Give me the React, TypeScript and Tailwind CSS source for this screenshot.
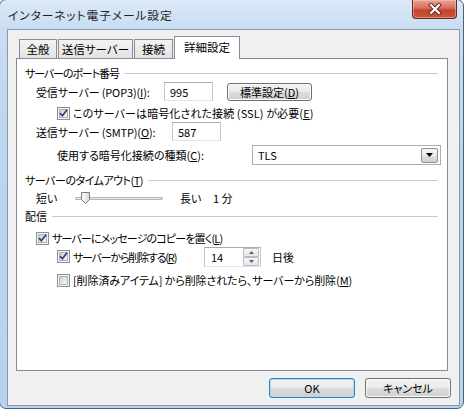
import type { ReactNode } from "react";

const font = "font-['Noto_Sans_CJK_JP','Noto_Sans_CJK_SC',sans-serif] [font-feature-settings:'palt']";

export default function App() {
  return (
    <div className={`h-[412px] w-[466px] overflow-hidden bg-white text-[11px] font-normal leading-[14px] text-black ${font}`}>
      <div className="-ml-px -mt-px flex h-[410px] w-[465px] flex-col rounded-[7px] border border-[#4f6073] bg-[linear-gradient(180deg,#dce9f8_0px,#c9ddf2_28px,#bdd5ee_140px,#b9d1ec_100%)]">
        {/* title bar */}
        <div className="flex h-[29px] shrink-0 items-start">
          <span className="ml-[8px] mt-[8px] whitespace-nowrap text-[11.75px] tracking-[0.9px] text-[#1e1e1e]">
            インターネット電子メール設定
          </span>
          <CloseButton />
        </div>

        {/* client area */}
        <div className="ml-[7px] flex h-[377px] w-[453px] flex-col border border-[#8799b0] bg-[#f0f0f0]">
          <div className="relative z-10 mt-[6px] flex h-[23px] items-start pl-[11px]">
            <Tab width="w-[38px]">全般</Tab>
            <Tab width="w-[75px] ml-px">送信サーバー</Tab>
            <Tab width="w-[39px] ml-px">接続</Tab>
            <div className="ml-px flex h-[23px] w-[66px] items-center justify-center border border-b-0 border-[#898c95] bg-white pb-[2px] text-[11.5px]">
              詳細設定
            </div>
          </div>

          <div className="-mt-px ml-[8px] flex h-[313px] w-[432px] flex-col border border-[#898c95] bg-white">
            <Header className="mt-[5px]" tracking="tracking-[-1.1px]">
              サーバーのポート番号
            </Header>

            <div className="flex h-[19px] items-center pl-[19px]">
              <span className="w-[128px] shrink-0 whitespace-nowrap tracking-[-0.15px]">
                受信サーバー (POP3)(<u>I</u>):
              </span>
              <Edit width="w-[49px]">995</Edit>
              <Button className="ml-[14px] h-[18px] w-[85px]">
                標準設定(<u>D</u>)
              </Button>
            </div>

            <div className="mt-[3px] flex h-[18px] items-center pl-[40px]">
              <CheckBox checked />
              <span className="ml-[3px] whitespace-nowrap tracking-[0.1px]">
                このサーバーは暗号化された接続 (SSL) が必要(<u>E</u>)
              </span>
            </div>

            <div className="flex h-[19px] items-center pl-[19px]">
              <span className="w-[136px] shrink-0 whitespace-nowrap tracking-[-0.15px]">
                送信サーバー (SMTP)(<u>O</u>):
              </span>
              <Edit width="w-[49px]">587</Edit>
            </div>

            <div className="mt-[4px] flex h-[20px] items-center pl-[40px]">
              <span className="w-[195px] shrink-0 whitespace-nowrap">
                使用する暗号化接続の種類(<u>C</u>):
              </span>
              <div className="flex h-[20px] w-[189px] items-center border border-[#abadb3] bg-white pl-[5px] pr-[2px]">
                <span className="flex-1">TLS</span>
                <div className="flex h-[15px] w-[17px] items-center justify-center rounded-[2px] border border-[#8e8f8f] bg-[linear-gradient(180deg,#f6f6f6_0%,#ebebeb_50%,#dddddd_50%,#d1d1d1_100%)]">
                  <svg width="7" height="4" viewBox="0 0 7 4">
                    <path d="M0 0 H7 L3.5 4 Z" fill="#000" />
                  </svg>
                </div>
              </div>
            </div>

            <Header className="mt-[6px]" tracking="tracking-[-0.5px]">
              サーバーのタイムアウト(<u>T</u>)
            </Header>

            <div className="flex h-[18px] items-center pl-[19px]">
              <span className="w-[39px] shrink-0">短い</span>
              <div className="relative h-[18px] w-[88px] shrink-0">
                <div className="absolute left-0 right-0 top-[8px] h-[3px] rounded-[1px] border border-[#b4b9be] bg-[#e7eaec]" />
                <svg className="absolute left-[6px] top-[3px]" width="9" height="12" viewBox="0 0 9 12">
                  <defs>
                    <linearGradient id="thumb" x1="0" y1="0" x2="1" y2="0">
                      <stop offset="0" stopColor="#ffffff" />
                      <stop offset="1" stopColor="#d4d8dc" />
                    </linearGradient>
                  </defs>
                  <path d="M0.5 0.5 H8.5 V7.5 L4.5 11.5 L0.5 7.5 Z" fill="url(#thumb)" stroke="#7c8186" />
                </svg>
              </div>
              <span className="ml-[17px] w-[33px] shrink-0">長い</span>
              <span>1 分</span>
            </div>

            <Header>配信</Header>

            <div className="mt-[4px] flex h-[18px] items-center pl-[19px]">
              <CheckBox checked />
              <span className="ml-[3px] whitespace-nowrap tracking-[-0.85px]">
                サーバーにメッセージのコピーを置く(<u>L</u>)
              </span>
            </div>

            <div className="flex h-[19px] items-center pl-[40px]">
              <CheckBox checked />
              <span className="ml-[3px] w-[131px] shrink-0 whitespace-nowrap tracking-[-1.2px]">
                サーバーから削除する(<u>R</u>)
              </span>
              <Spinner value="14" />
              <span className="ml-[11px]">日後</span>
            </div>

            <div className="mt-[5px] flex h-[18px] items-center pl-[40px]">
              <CheckBox checked={false} />
              <span className="ml-[3px] whitespace-nowrap tracking-[-0.1px]">
                [削除済みアイテム] から削除されたら、サーバーから削除(<u>M</u>)
              </span>
            </div>
          </div>

          <div className="mt-[7px] flex justify-end gap-[10px] pr-[8px]">
            <Button className="h-[20px] w-[86px]" primary>
              OK
            </Button>
            <Button className="h-[20px] w-[86px]">キャンセル</Button>
          </div>
        </div>
      </div>
    </div>
  );
}

function CloseButton() {
  return (
    <div className="ml-auto mr-[6px] flex h-[19px] w-[45px] items-center justify-center rounded-b-[4px] border border-t-0 border-[#5e2b26] bg-[linear-gradient(180deg,#e8a493_0%,#d6705c_45%,#c3432d_55%,#c9553c_100%)] shadow-[inset_0_0_0_1px_rgba(255,210,200,0.45)]">
      <svg width="14" height="12" viewBox="0 0 14 12">
        <path d="M3 2 L11 10 M11 2 L3 10" stroke="#5a2420" strokeWidth="4" strokeLinecap="square" />
        <path d="M3 2 L11 10 M11 2 L3 10" stroke="#ffffff" strokeWidth="2.2" strokeLinecap="square" />
      </svg>
    </div>
  );
}

function Tab({ width, children }: { width: string; children: ReactNode }) {
  return (
    <div
      className={`${width} mt-[3px] flex h-[19px] items-center justify-center border border-b-0 border-[#898c95] bg-[linear-gradient(180deg,#f3f3f3_0%,#ebebeb_50%,#e2e2e2_100%)] text-[11.5px]`}
    >
      {children}
    </div>
  );
}

function Header({
  className = "",
  tracking = "",
  children,
}: {
  className?: string;
  tracking?: string;
  children: ReactNode;
}) {
  return (
    <div className={`flex h-[18px] items-center pl-[8px] pr-[9px] ${className}`}>
      <span className={`whitespace-nowrap ${tracking}`}>{children}</span>
      <span className="ml-[5px] h-px flex-1 bg-[#c5cace]" />
    </div>
  );
}

function Edit({ width, children }: { width: string; children: ReactNode }) {
  return (
    <div
      className={`${width} flex h-[19px] shrink-0 items-center border border-[#c2c6cd] border-t-[#abadb3] border-b-[#dfe3ea] bg-white pl-[5px]`}
    >
      {children}
    </div>
  );
}

function Button({
  className = "",
  primary = false,
  children,
}: {
  className?: string;
  primary?: boolean;
  children: ReactNode;
}) {
  return (
    <div
      className={`${className} flex shrink-0 items-center justify-center rounded-[3px] border bg-[linear-gradient(180deg,#f2f2f2_0%,#ebebeb_50%,#dddddd_50%,#cfcfcf_100%)] ${
        primary
          ? "border-[#3c7fb1] shadow-[inset_0_0_0_1px_#a6dcf6]"
          : "border-[#707070] shadow-[inset_0_0_0_1px_#fafafa]"
      }`}
    >
      {children}
    </div>
  );
}

function CheckBox({ checked }: { checked: boolean }) {
  return (
    <span className="flex h-[13px] w-[13px] shrink-0 items-center justify-center border border-[#8e8f8f] bg-[#f4f4f4]">
      <span className="flex h-[9px] w-[9px] items-center justify-center border border-[#aeb3b9] bg-[linear-gradient(135deg,#c9ced4_0%,#e6e8eb_60%,#f8f8f8_100%)]">
        {checked && (
          <svg width="9" height="9" viewBox="0 0 9 9" className="overflow-visible">
            <path d="M1 4.2 L3.4 6.8 L8 0.8" fill="none" stroke="#2f3f78" strokeWidth="1.7" />
          </svg>
        )}
      </span>
    </span>
  );
}

function Spinner({ value }: { value: string }) {
  return (
    <div className="flex h-[20px] w-[57px] shrink-0 items-center border border-[#c2c6cd] border-t-[#abadb3] border-b-[#dfe3ea] bg-white pl-[6px] pr-px">
      <span className="flex-1">{value}</span>
      <div className="flex h-[18px] w-[16px] flex-col">
        <SpinArrow up />
        <SpinArrow up={false} />
      </div>
    </div>
  );
}

function SpinArrow({ up }: { up: boolean }) {
  return (
    <div className="flex h-[9px] items-center justify-center rounded-[1px] border border-[#b9bdc3] bg-[linear-gradient(180deg,#f5f5f5_0%,#e6e6e6_100%)]">
      <svg width="5" height="3" viewBox="0 0 5 3">
        <path d={up ? "M0 3 H5 L2.5 0 Z" : "M0 0 H5 L2.5 3 Z"} fill="#4d6185" />
      </svg>
    </div>
  );
}
